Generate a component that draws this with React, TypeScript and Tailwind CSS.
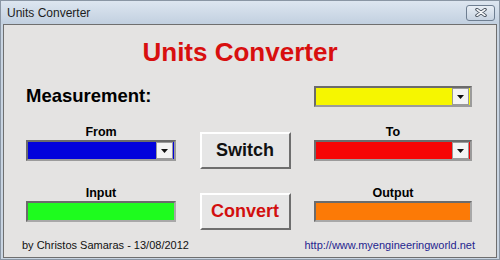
import React from 'react';

const DropArrow: React.FC = () => (
  <div className="w-[17px] h-[17px] my-auto mr-[1px] bg-[#f4f4f4] border border-[#9a9a9a] flex items-center justify-center">
    <svg width="7" height="4" viewBox="0 0 7 4">
      <polygon points="0,0 7,0 3.5,4" fill="#111" />
    </svg>
  </div>
);

const ComboBox: React.FC<{ color: string; width: string }> = ({ color, width }) => (
  <div className={`${width} h-[21px] flex border-2 border-t-[#6b6b6b] border-l-[#6b6b6b] border-b-[#9b9b9b] border-r-[#9b9b9b] ${color}`}>
    <div className="flex-1" />
    <DropArrow />
  </div>
);

const TextBox: React.FC<{ color: string; width: string }> = ({ color, width }) => (
  <div className={`${width} h-[21px] border-2 border-t-[#6b6b6b] border-l-[#6b6b6b] border-b-[#a8a8a8] border-r-[#a8a8a8] ${color}`} />
);

const Button: React.FC<{ label: string; textColor: string }> = ({ label, textColor }) => (
  <button
    className={`mt-[8px] w-[91px] h-[37px] bg-[#e6e6e6] border-t-2 border-l-2 border-t-white border-l-white border-b-2 border-r-2 border-b-[#6e6e6e] border-r-[#6e6e6e] font-bold text-[18px] ${textColor}`}
    style={{ fontFamily: '"Liberation Sans", Arial, sans-serif' }}
  >
    {label}
  </button>
);

export default function App() {
  const sans = { fontFamily: '"Liberation Sans", Arial, sans-serif' };

  return (
    <div className="w-[500px] h-[260px] bg-[#c9d5e2] flex flex-col border border-[#8a96a4]" style={sans}>
      {/* title bar */}
      <div className="h-[23px] flex items-center justify-between pl-[6px] pr-[4px] bg-gradient-to-b from-[#dde6f0] to-[#c2d0e0]">
        <span className="text-[12px] text-[#1c1c1c]">Units Converter</span>
        <div className="w-[29px] h-[16px] rounded-[3px] border border-[#6e7e91] bg-gradient-to-b from-[#e8eef5] to-[#c7d3e1] flex items-center justify-center">
          <svg width="12" height="9" viewBox="0 0 12 9">
            <path d="M2 1.5 L10 7.5 M10 1.5 L2 7.5" stroke="#3c4653" strokeWidth="3.4" strokeLinecap="round" />
            <path d="M2 1.5 L10 7.5 M10 1.5 L2 7.5" stroke="#f4f6f8" strokeWidth="1.6" strokeLinecap="round" />
          </svg>
        </div>
      </div>

      {/* window body */}
      <div className="flex-1 mx-[2px] mb-[1px] bg-[#e4e3e2] border border-[#6f6f6f] flex flex-col pl-[22px] pr-[24px]">
        <h1 className="mt-[12px] h-[30px] leading-[30px] text-center text-[26px] font-bold text-[#d80f0f] pr-[18px]">
          Units Converter
        </h1>

        <div className="mt-[18px] flex items-center justify-between">
          <span className="text-[18.5px] font-bold text-black leading-[21px] pb-[2px]">Measurement:</span>
          <ComboBox color="bg-[#f6f600]" width="w-[158px]" />
        </div>

        <div className="mt-[16px] flex justify-between">
          <div className="flex flex-col items-center">
            <span className="text-[12.5px] font-bold leading-[16px] text-black">From</span>
            <ComboBox color="bg-[#0202dc]" width="w-[150px]" />
          </div>
          <Button label="Switch" textColor="text-[#111]" />
          <div className="flex flex-col items-center">
            <span className="text-[12.5px] font-bold leading-[16px] text-black">To</span>
            <ComboBox color="bg-[#f60404]" width="w-[158px]" />
          </div>
        </div>

        <div className="mt-[16px] flex justify-between">
          <div className="flex flex-col items-center">
            <span className="text-[12.5px] font-bold leading-[16px] text-black">Input</span>
            <TextBox color="bg-[#1efc1e]" width="w-[150px]" />
          </div>
          <Button label="Convert" textColor="text-[#d20f0f]" />
          <div className="flex flex-col items-center">
            <span className="text-[12.5px] font-bold leading-[16px] text-black">Output</span>
            <TextBox color="bg-[#fc7a06]" width="w-[158px]" />
          </div>
        </div>

        <div className="mt-[8px] flex justify-between items-center -ml-[4px] -mr-[3px] text-[11px] leading-[15px]">
          <span className="text-[#111]">by Christos Samaras - 13/08/2012</span>
          <span className="text-[#25258f]">http://www.myengineeringworld.net</span>
        </div>
      </div>
    </div>
  );
}
